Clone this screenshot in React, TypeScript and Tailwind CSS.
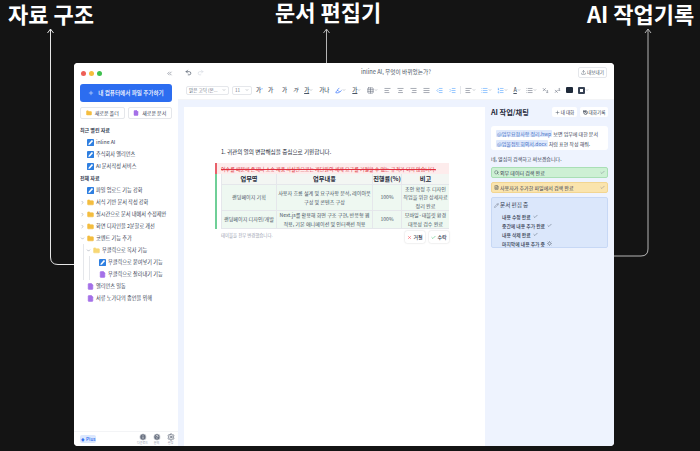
import { ReactNode } from "react"
import {
  AlignCenter,
  AlignJustify,
  AlignLeft,
  AlignRight,
  Check,
  ChevronDown,
  ChevronRight,
  ChevronsLeft,
  CircleHelp,
  FileText,
  Folder,
  Highlighter,
  History,
  Indent,
  Info,
  List,
  ListOrdered,
  Loader,
  Outdent,
  Pencil,
  Plus,
  Redo2,
  Search,
  Settings,
  Subscript,
  Superscript,
  Table,
  Undo2,
  Upload,
  X,
} from "lucide-react"

const FONT = "font-['Noto_Sans_CJK_KR','Noto_Sans',sans-serif]"

function DocIcon({ kind }: { kind: "blue" | "purple" }) {
  if (kind === "purple") {
    return <FileText className="h-[7px] w-[7px] shrink-0 fill-[#a571e8] text-[#a571e8]" strokeWidth={2} />
  }
  return (
    <svg viewBox="0 0 8 8" className="h-[7px] w-[7px] shrink-0">
      <rect width="8" height="8" rx="1" fill="#2f7fe0" />
      <path d="M5.5 1.2 7 2.4 3.4 6.4 1.6 6.8 2 5z" fill="#ffffff" />
    </svg>
  )
}

function FolderIcon({ open }: { open?: boolean }) {
  return (
    <Folder
      className={`h-[7px] w-[7px] shrink-0 ${open ? "fill-[#f7d774] text-[#f7d774]" : "fill-[#f4bd3f] text-[#f4bd3f]"}`}
    />
  )
}

function Row({
  indent = 0,
  icon,
  caret,
  children,
}: {
  indent?: number
  icon: ReactNode
  caret?: "right" | "down"
  children: ReactNode
}) {
  return (
    <div className="flex h-3 items-center" style={{ paddingLeft: indent }}>
      <span className="flex w-[6px] shrink-0 items-center">
        {caret === "right" ? <ChevronRight className="h-[5px] w-[5px] text-gray-500" /> : null}
        {caret === "down" ? <ChevronDown className="h-[5px] w-[5px] text-gray-500" /> : null}
      </span>
      <span className="mx-[1px]">{icon}</span>
      <span className="ml-[1px] whitespace-nowrap text-[5.2px] text-gray-700">{children}</span>
    </div>
  )
}

function Sidebar() {
  return (
    <aside className="flex w-[104px] shrink-0 flex-col bg-white">
      <div className="flex h-[21px] shrink-0 items-center justify-between pl-[7px] pr-[5px]">
        <div className="flex gap-[3px]">
          <span className="h-[5px] w-[5px] rounded-full bg-[#ee5f57]" />
          <span className="h-[5px] w-[5px] rounded-full bg-[#f6bd3c]" />
          <span className="h-[5px] w-[5px] rounded-full bg-[#3fc04f]" />
        </div>
        <ChevronsLeft className="h-[7px] w-[7px] text-gray-500" />
      </div>
      <div className="px-[6px]">
        <button className="flex h-[18px] w-full items-center justify-center gap-[4px] rounded-[3px] bg-[#2c6df0] text-[5.6px] font-medium text-white">
          <Plus className="h-[6px] w-[6px]" />내 컴퓨터에서 파일 추가하기
        </button>
        <div className="mt-[5px] flex gap-[3px]">
          <button className="flex h-3 flex-1 items-center justify-center gap-[3px] rounded-[2px] border border-gray-200 text-[5px] text-gray-700">
            <Folder className="h-[6px] w-[6px] fill-[#f4bd3f] text-[#f4bd3f]" />새로운 폴더
          </button>
          <button className="flex h-3 flex-1 items-center justify-center gap-[3px] rounded-[2px] border border-gray-200 text-[5px] text-gray-700">
            <FileText className="h-[6px] w-[6px] fill-[#a571e8] text-[#a571e8]" />새로운 문서
          </button>
        </div>
      </div>
      <div className="mt-[5px] flex-1 pl-[6px]">
        <div className="flex h-3 items-center text-[5px] font-semibold text-gray-700">최근 열린 자료</div>
        <Row icon={<DocIcon kind="blue" />}>inline AI</Row>
        <Row icon={<DocIcon kind="blue" />}>주식회사 엘리먼츠</Row>
        <Row icon={<DocIcon kind="blue" />}>AI 문서작성 서비스</Row>
        <div className="flex h-3 items-center text-[5px] font-semibold text-gray-700">전체 자료</div>
        <Row icon={<DocIcon kind="blue" />}>파일 업로드 기능 강화</Row>
        <Row caret="right" icon={<FolderIcon />}>서식 기반 문서 작성 강화</Row>
        <Row caret="right" icon={<FolderIcon />}>실시간으로 문서 내에서 수정제안</Row>
        <Row caret="right" icon={<FolderIcon />}>화면 디자인을 2분할로 개선</Row>
        <Row caret="down" icon={<FolderIcon />}>코멘트 기능 추가</Row>
        <div className="ml-[3px] border-l border-gray-200">
          <Row indent={2} caret="down" icon={<FolderIcon open />}>우클릭으로 복사 기능</Row>
          <div className="ml-[5px] border-l border-gray-200">
            <Row indent={2} icon={<DocIcon kind="blue" />}>우클릭으로 붙여넣기 기능</Row>
            <Row indent={2} icon={<DocIcon kind="purple" />}>우클릭으로 잘라내기 기능</Row>
          </div>
        </div>
        <Row icon={<DocIcon kind="purple" />}>엘리먼츠 일동</Row>
        <Row icon={<DocIcon kind="purple" />}>서류 노가다의 종언을 위해</Row>
      </div>
      <div className="flex h-[15px] shrink-0 items-center justify-between border-t border-gray-100 pl-[6px] pr-[3px]">
        <span className="flex h-2 w-4 items-center justify-center rounded-[2px] bg-[#dbe7fd] text-[4.6px] font-medium text-[#2c6df0]">
          ♦ Plus
        </span>
        <div className="flex gap-[5px]">
          {[
            { label: "다운로드", icon: <Info className="h-[8px] w-[8px] fill-gray-500 text-white" /> },
            { label: "문의", icon: <CircleHelp className="h-[8px] w-[8px] fill-gray-500 text-white" /> },
            { label: "설정", icon: <Settings className="h-[8px] w-[8px] text-gray-500" strokeWidth={2.5} /> },
          ].map((item) => (
            <div key={item.label} className="flex w-[9px] flex-col items-center">
              {item.icon}
              <span className="whitespace-nowrap text-[3px] leading-[4px] text-gray-400">{item.label}</span>
            </div>
          ))}
        </div>
      </div>
    </aside>
  )
}

function ToolText({ children, caret, className = "" }: { children: ReactNode; caret?: boolean; className?: string }) {
  return (
    <span className={`flex items-center text-[5.5px] font-medium text-gray-600 ${className}`}>
      {children}
      {caret ? <ChevronDown className="h-[4px] w-[4px] text-gray-500" /> : null}
    </span>
  )
}

function Toolbar() {
  const icon = "h-[7px] w-[7px] text-gray-500"
  return (
    <div className="flex h-[19px] shrink-0 items-center border-b border-gray-100 bg-white pl-[8px]">
      <span className="flex h-[9px] w-[43px] items-center justify-between rounded-[2px] border border-gray-200 px-[2px] text-[4.6px] text-gray-500">
        맑은 고딕 (본...
        <ChevronDown className="h-[4px] w-[4px]" />
      </span>
      <span className="ml-[3px] flex h-[9px] w-[20px] items-center justify-between rounded-[2px] border border-gray-200 px-[2px] text-[4.6px] text-gray-500">
        11
        <ChevronDown className="h-[4px] w-[4px]" />
      </span>
      <div className="ml-[4px] flex items-center gap-[5px]">
        <ToolText className="w-[7px]">가<sup className="text-[3px] text-blue-500">+</sup></ToolText>
        <ToolText className="w-[7px]">가<sup className="text-[3px] text-blue-500">-</sup></ToolText>
      </div>
      <div className="ml-[7px] flex items-center gap-[6px]">
        <ToolText className="font-bold">가</ToolText>
        <ToolText className="italic">가</ToolText>
        <ToolText caret className="underline">가</ToolText>
        <ToolText>가나</ToolText>
      </div>
      <div className="ml-[6px] flex items-center gap-[6px]">
        <span className="flex items-center">
          <Highlighter className="h-[7px] w-[7px] text-blue-600" />
          <ChevronDown className="h-[4px] w-[4px] text-gray-500" />
        </span>
        <ToolText caret className="text-blue-700 underline">가</ToolText>
      </div>
      <span className="ml-[6px] flex items-center">
        <Table className={icon} />
        <ChevronDown className="h-[4px] w-[4px] text-gray-500" />
      </span>
      <div className="ml-[6px] flex items-center gap-[6px]">
        <AlignLeft className={icon} />
        <AlignCenter className={icon} />
        <AlignRight className={icon} />
        <AlignJustify className={icon} />
        <Outdent className="h-[7px] w-[7px] text-blue-400" />
        <Indent className="h-[7px] w-[7px] text-blue-400" />
      </div>
      <span className="mx-[4px] h-2 w-px bg-gray-200" />
      <div className="flex items-center gap-[5px]">
        <span className="flex items-center">
          <AlignLeft className={icon} />
          <ChevronDown className="h-[4px] w-[4px] text-gray-500" />
        </span>
        <span className="flex items-center">
          <List className="h-[7px] w-[7px] text-blue-400" />
          <ChevronDown className="h-[4px] w-[4px] text-gray-500" />
        </span>
        <span className="flex items-center">
          <ListOrdered className="h-[7px] w-[7px] text-blue-400" />
          <ChevronDown className="h-[4px] w-[4px] text-gray-500" />
        </span>
        <ToolText caret className="text-blue-600 underline">A</ToolText>
        <span className="flex items-center">
          <List className={icon} />
          <ChevronDown className="h-[4px] w-[4px] text-gray-500" />
        </span>
        <Subscript className={icon} />
        <Superscript className={icon} />
        <span className="h-[6px] w-[7px] rounded-[1px] bg-gray-800" />
        <span className="flex items-center">
          <span className="h-[7px] w-[7px] rounded-[1px] border-2 border-gray-700" />
          <ChevronDown className="h-[4px] w-[4px] text-gray-500" />
        </span>
      </div>
    </div>
  )
}

function Cell({ children, head, className = "" }: { children: ReactNode; head?: boolean; className?: string }) {
  return (
    <div
      className={`flex items-center justify-center border-b border-r border-gray-200 px-[1px] text-center ${
        head ? "bg-[#f3f6f3] text-[6.2px] font-bold text-gray-800" : "text-[5.1px] leading-[8.4px] text-gray-600"
      } ${className}`}
    >
      {children}
    </div>
  )
}

function Document() {
  return (
    <div className="mt-[7px] ml-[6px] w-[301px] bg-white pl-[37px] pr-[36px] pt-[41px]">
      <p className="h-[15px] text-[5.6px] leading-[9px] text-gray-800">
        1. 귀관의 열의 변함해심을 중심으로 기원합니다.
      </p>
      <div className="-ml-[6px] flex h-[11px] items-center whitespace-nowrap border-l-2 border-[#e8606a] bg-[#fdecec] pl-[4px] text-[5px] text-[#e0323f] line-through">
        여수를 때문에 존재나 소송 제품 사실관으로는 개단원의 세제 요구를 거절할 수 없는 규격가 되지 않습니다.
      </div>
      <div className="-ml-[6px] border-l-2 border-[#6fcf97] pl-[4px]">
        <div className="grid h-[55px] grid-cols-[55px_96px_29px_48px] grid-rows-[11px_26px_18px] overflow-hidden border-l border-gray-200 bg-[#eef8f1]">
          <Cell head>업무명</Cell>
          <Cell head>업무내용</Cell>
          <Cell head className="whitespace-nowrap">진행률(%)</Cell>
          <Cell head>비고</Cell>
          <Cell>랜딩페이지 기획</Cell>
          <Cell>사용자 흐름 설계 및 요구사항 분석, 레이아웃 구성 및 콘텐츠 구상</Cell>
          <Cell>100%</Cell>
          <Cell>초안 확정 후 디자인 작업을 위한 상세자료 정리 완료</Cell>
          <Cell className="whitespace-nowrap">랜딩페이지 디자인/개발</Cell>
          <Cell>Next.js를 활용해 화면 구조 구현, 반응형 웹 적용, 기본 애니메이션 및 인터랙션 적용</Cell>
          <Cell>100%</Cell>
          <Cell>모바일·태블릿 환경 대응성 검수 완료</Cell>
        </div>
      </div>
      <div className="mt-[2px] flex items-start justify-between">
        <span className="mt-[1px] text-[4.4px] text-gray-400">테이블을 전부 변경했습니다.</span>
        <div className="flex gap-1">
          <button className="flex h-3 w-5 items-center justify-center gap-[1px] rounded-[2px] bg-white text-[5px] font-medium text-gray-700 shadow-[0_0_2px_rgba(0,0,0,0.2)]">
            <X className="h-[5px] w-[5px] text-red-500" />거절
          </button>
          <button className="flex h-3 w-5 items-center justify-center gap-[1px] rounded-[2px] bg-white text-[5px] font-medium text-gray-700 shadow-[0_0_2px_rgba(0,0,0,0.2)]">
            <Check className="h-[5px] w-[5px] text-green-600" />수락
          </button>
        </div>
      </div>
    </div>
  )
}

function Tag({ children }: { children: ReactNode }) {
  return <span className="rounded-[1px] bg-[#dfe9fc] px-[1px] text-[#3f6fc4]">{children}</span>
}

function AiPanel() {
  return (
    <div className="flex w-[129px] shrink-0 flex-col pl-[6px] pr-[6px] pt-[7px]">
      <div className="flex h-[10px] items-center justify-between">
        <h2 className="text-[7.2px] font-bold text-gray-800">AI 작업/채팅</h2>
        <div className="flex gap-[3px]">
          <button className="flex h-[10px] w-[25px] items-center justify-center gap-[1px] rounded-[2px] bg-white text-[4.6px] text-gray-700">
            <Plus className="h-[5px] w-[5px]" />내 대화
          </button>
          <button className="flex h-[10px] w-[28px] items-center justify-center gap-[1px] rounded-[2px] bg-white text-[4.6px] text-gray-700">
            <History className="h-[5px] w-[5px] text-gray-800" strokeWidth={3} />대화기록
          </button>
        </div>
      </div>
      <div className="mt-[9px] h-[24px] rounded-[3px] bg-white px-[5px] pt-[3px] text-[5px] leading-[10px] text-gray-700">
        <div className="whitespace-nowrap"><Tag>@업무요청사항 정리.hwp</Tag> 보면 업무에 대한 문서</div>
        <div className="whitespace-nowrap"><Tag>@업물점토회의서.docx</Tag> 처럼 표현 작성 해줘.</div>
      </div>
      <p className="mt-[5px] text-[5px] leading-[8px] text-gray-700">네, 열심히 검색하고 써보겠습니다.</p>
      <div className="mt-[4px] flex h-[11px] items-center justify-between rounded-[2px] border border-[#a9dfb5] bg-[#cdf0d4] px-[2px] text-[5px] text-gray-700">
        <span className="flex items-center gap-[1px]"><Search className="h-[5px] w-[5px] text-gray-700" />외부 데이터 검색 완료</span>
        <Check className="h-[5px] w-[5px] text-gray-500" />
      </div>
      <div className="mt-[4px] flex h-[11px] items-center justify-between rounded-[2px] border border-[#f2d591] bg-[#fae4ad] px-[2px] text-[5px] text-gray-700">
        <span className="flex items-center gap-[1px]"><FileText className="h-[5px] w-[5px] text-gray-700" />사용자가 추가한 파일에서 검색 완료</span>
        <Check className="h-[5px] w-[5px] text-gray-500" />
      </div>
      <div className="mt-[4px] h-[51px] rounded-[2px] border border-[#c7d8f5] bg-[#dbe7fb] pl-[2px] pt-[3px] text-[4.8px] text-gray-700">
        <div className="flex h-2 items-center gap-[1px] text-[5.6px]">
          <Pencil className="h-[5px] w-[5px] text-gray-500" />문서 편집 중
        </div>
        <div className="mt-[3px] pl-[8px] font-medium">
          <div className="flex h-[9px] items-center gap-[2px]">내용 수정 완료<Check className="h-[5px] w-[5px]" /></div>
          <div className="flex h-[9px] items-center gap-[2px]">중간에 내용 추가 완료<Check className="h-[5px] w-[5px]" /></div>
          <div className="flex h-[9px] items-center gap-[2px]">내용 삭제 완료<Check className="h-[5px] w-[5px]" /></div>
          <div className="flex h-[9px] items-center gap-[2px]">마지막에 내용 추가 중<Loader className="h-[5px] w-[5px]" /></div>
        </div>
      </div>
    </div>
  )
}

function Annotations() {
  return (
    <>
      <span className="absolute left-[8px] top-px text-[22px] font-semibold leading-[24px] text-white">자료 구조</span>
      <span className="absolute left-[275px] top-0 text-[22px] font-semibold leading-[22px] text-white">문서 편집기</span>
      <span className="absolute left-[587px] top-px text-[22px] font-semibold leading-[24px] text-white">AI 작업기록</span>
      <svg viewBox="0 0 700 451" className="pointer-events-none absolute inset-0 h-[451px] w-[700px]" fill="none">
        <path d="M50.5 29V257Q50.5 264.5 58 264.5H74M47.5 33 50.5 29 53.5 33" stroke="#e5e5e5" />
        <path d="M326.5 29V63M323.5 33 326.5 29 329.5 33" stroke="#b5b5b5" />
        <path d="M648 29V249Q648 256 641 256H614M645 33 648 29 651 33" stroke="#b5b5b5" />
      </svg>
    </>
  )
}

export default function App() {
  return (
    <div className={`relative h-[451px] w-[700px] overflow-hidden bg-[#141414] pl-[74px] pt-[63px] ${FONT}`}>
      <Annotations />
      <div className="relative flex h-[383px] w-[540px] overflow-hidden rounded-[4px] bg-white">
        <Sidebar />
        <main className="flex min-w-0 flex-1 flex-col">
          <div className="flex h-[18px] shrink-0 items-center justify-between bg-white pl-[7px] pr-[7px]">
            <div className="flex w-[29px] gap-[5px]">
              <Undo2 className="h-[7px] w-[7px] text-gray-700" />
              <Redo2 className="h-[7px] w-[7px] text-gray-300" />
            </div>
            <span className="text-[5.7px] text-gray-600">inline AI, 무엇이 바뀌었는가?</span>
            <button className="flex h-[11px] w-[29px] items-center justify-center gap-[1px] rounded-[2px] border border-gray-200 text-[4.6px] text-gray-600">
              <Upload className="h-[5px] w-[5px]" />내보내기
            </button>
          </div>
          <Toolbar />
          <div className="flex min-h-0 flex-1 bg-[#eef3fe]">
            <Document />
            <AiPanel />
          </div>
        </main>
      </div>
    </div>
  )
}
